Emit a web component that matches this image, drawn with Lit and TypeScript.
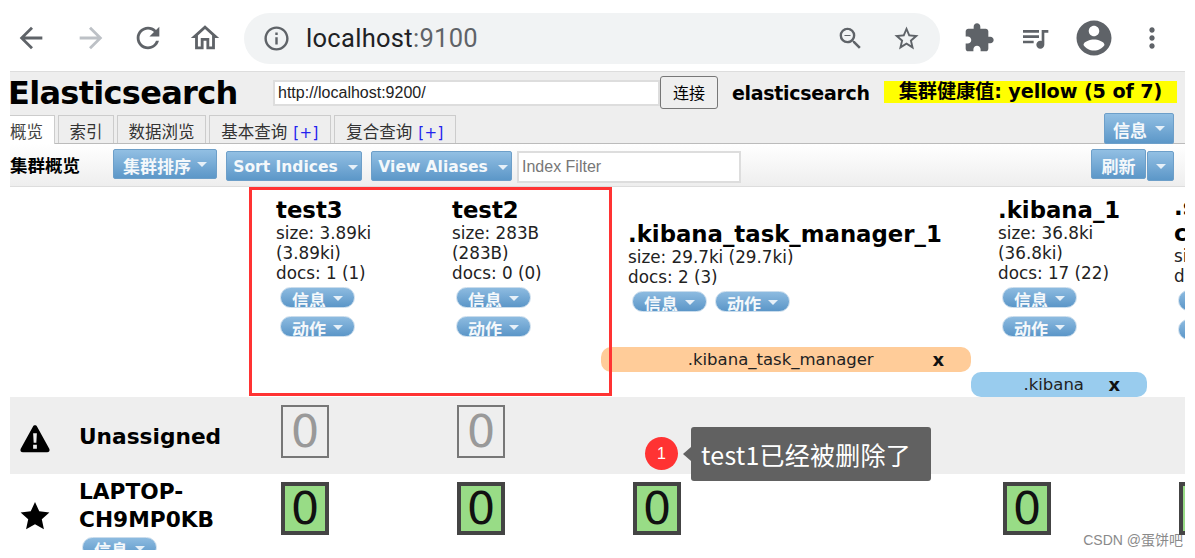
import { LitElement, html, css, svg } from "lit";
import { customElement } from "lit/decorators.js";

const ICONS: Record<string, string> = {
  back: "M20 11H7.83l5.59-5.59L12 4l-8 8 8 8 1.41-1.41L7.83 13H20v-2z",
  reload: "M17.65 6.35A7.958 7.958 0 0012 4c-4.42 0-7.99 3.58-7.99 8s3.57 8 7.99 8c3.73 0 6.84-2.55 7.73-6h-2.08A5.99 5.99 0 0112 18c-3.31 0-6-2.69-6-6s2.69-6 6-6c1.66 0 3.14.69 4.22 1.78L13 11h7V4l-2.35 2.35z",
  home: "M12 5.69l5 4.5V18h-2v-6H9v6H7v-7.81l5-4.5M12 3L2 12h3v8h6v-6h2v6h6v-8h3L12 3z",
  info: "M11 7h2v2h-2zm0 4h2v6h-2zm1-9C6.48 2 2 6.48 2 12s4.48 10 10 10 10-4.48 10-10S17.52 2 12 2zm0 18c-4.41 0-8-3.59-8-8s3.59-8 8-8 8 3.59 8 8-3.59 8-8 8z",
  zoom: "M15.5 14h-.79l-.28-.27A6.471 6.471 0 0016 9.5 6.5 6.5 0 109.5 16c1.61 0 3.09-.59 4.23-1.57l.27.28v.79l5 4.99L20.49 19l-4.99-5zm-6 0C7.01 14 5 11.99 5 9.5S7.01 5 9.5 5 14 7.01 14 9.5 11.99 14 9.5 14zM7 9h5v1H7z",
  star: "M22 9.24l-7.19-.62L12 2 9.19 8.63 2 9.24l5.46 4.73L5.82 21 12 17.27 18.18 21l-1.63-7.03L22 9.24zM12 15.4l-3.76 2.27 1-4.28-3.32-2.88 4.38-.38L12 6.1l1.71 4.04 4.38.38-3.32 2.88 1 4.28L12 15.4z",
  ext: "M20.5 11H19V7c0-1.1-.9-2-2-2h-4V3.5C13 2.12 11.88 1 10.5 1S8 2.12 8 3.5V5H4c-1.1 0-1.99.9-1.99 2v3.8H3.5c1.49 0 2.7 1.21 2.7 2.7s-1.21 2.7-2.7 2.7H2V20c0 1.1.9 2 2 2h3.8v-1.5c0-1.49 1.21-2.7 2.7-2.7 1.49 0 2.7 1.21 2.7 2.7V22H17c1.1 0 2-.9 2-2v-4h1.5c1.38 0 2.5-1.12 2.5-2.5S21.88 11 20.5 11z",
  queue: "M15 6H3v2h12V6zm0 4H3v2h12v-2zM3 16h8v-2H3v2zM17 6v8.18c-.31-.11-.65-.18-1-.18-1.66 0-3 1.34-3 3s1.34 3 3 3 3-1.34 3-3V8h3V6h-5z",
  user: "M12 2C6.48 2 2 6.48 2 12s4.48 10 10 10 10-4.48 10-10S17.52 2 12 2zm0 3c1.66 0 3 1.34 3 3s-1.34 3-3 3-3-1.34-3-3 1.34-3 3-3zm0 14.2c-2.5 0-4.71-1.28-6-3.22.03-1.99 4-3.08 6-3.08 1.99 0 5.97 1.09 6 3.08-1.29 1.94-3.5 3.22-6 3.22z",
  more: "M12 8c1.1 0 2-.9 2-2s-.9-2-2-2-2 .9-2 2 .9 2 2 2zm0 2c-1.1 0-2 .9-2 2s.9 2 2 2 2-.9 2-2-.9-2-2-2zm0 6c-1.1 0-2 .9-2 2s.9 2 2 2 2-.9 2-2-.9-2-2-2z",
  warn: "M12 2.5c-.7 0-1.2.4-1.6 1L1.3 20c-.7 1.3.1 2.6 1.6 2.6h18.2c1.5 0 2.3-1.3 1.6-2.6L13.6 3.5c-.4-.6-.9-1-1.6-1zM10.6 8.5h2.8l-.4 7h-2l-.4-7zM10.6 17h2.8v3h-2.8v-3z",
  solid: "M12 1.5l3.2 7 7.6.8-5.7 5.1 1.6 7.6L12 18.2 5.3 22l1.6-7.6L1.2 9.3l7.6-.8z",
};

const icon = (name: string, cls = "") =>
  html`<svg class="ic ${cls}" viewBox="0 0 24 24">${svg`<path d=${ICONS[name]}></path>`}</svg>`;

function svgFlip() {
  return html`<svg class="ic" viewBox="0 0 24 24">${svg`<path transform="matrix(-1 0 0 1 24 0)" d=${ICONS.back}></path>`}</svg>`;
}

interface Index { name: string; lines: string[]; stacked: boolean; }

const INDICES: Index[] = [
  { name: "test3", lines: ["size: 3.89ki (3.89ki)", "docs: 1 (1)"], stacked: true },
  { name: "test2", lines: ["size: 283B (283B)", "docs: 0 (0)"], stacked: true },
  { name: ".kibana_task_manager_1", lines: ["size: 29.7ki (29.7ki)", "docs: 2 (3)"], stacked: false },
  { name: ".kibana_1", lines: ["size: 36.8ki (36.8ki)", "docs: 17 (22)"], stacked: true },
  { name: ".security config", lines: ["size: 3.5ki", "docs: 1 (1)"], stacked: true },
];

@customElement("app-root")
export class AppRoot extends LitElement {
  static styles = css`
    :host { display: block; width: 1195px; height: 558px; overflow: hidden; background: #fff; position: relative; font-family: "DejaVu Sans", sans-serif; color: #000; }
    * { box-sizing: border-box; }
    .ic { display: block; fill: currentColor; flex: none; }

    .chrome { height: 71px; display: flex; align-items: center; padding: 5px 0 0 14px; color: #5f6368; }
    .nav { width: 60px; display: flex; align-items: center; }
    .nav .ic { width: 34px; height: 34px; }
    .nav.fwd { color: #bdc1c6; width: 57px; }
    .nav.rel { width: 57px; }
    .nav.hm { width: 56px; }
    .omni { width: 696px; height: 51px; border-radius: 26px; background: #f1f3f4; display: flex; align-items: center; padding-left: 18px; }
    .omni .ic { width: 29px; height: 29px; }
    .url { font: 25.5px Roboto, sans-serif; color: #202124; margin-left: 15px; flex: 1; letter-spacing: .3px; }
    .url span { color: #5f6368; }
    .omni .z { margin-right: 27px; }
    .omni .s { margin-right: 19px; }
    .tools { display: flex; align-items: center; margin-left: 23px; gap: 24px; }
    .tools .ic { width: 32px; height: 32px; }
    .tools .m { width: 42px; height: 42px; margin: 0 -3px 0 -2px; }

    .page { margin-left: 10px; width: 1175px; height: 479px; overflow: hidden; }
    .top { height: 73px; background: #eee; border-top: 1px solid #ddd; border-bottom: 1px solid #bbb; display: flex; flex-direction: column; }
    .head { height: 43px; display: flex; align-items: center; }
    .title { font: bold 32px/1.3 "DejaVu Sans", sans-serif; letter-spacing: -.7px; width: 263px; white-space: nowrap; margin: 0 0 0 -2px; flex: none; }
    .uri { width: 387px; height: 26px; margin: -2px 0 0 2px; background: #fff; border: 2px solid #ddd; font: 16px/22px "Liberation Sans", sans-serif; padding-left: 3px; color: #222; }
    .conn { width: 58px; height: 33px; margin-top: -2px; border: 1px solid #777; border-radius: 3px; background: #efefef; font: 16px/31px "Noto Sans CJK SC", sans-serif; text-align: center; }
    .cname { font: bold 19px "DejaVu Sans", sans-serif; margin: -2px 0 0 14px; width: 152px; white-space: nowrap; letter-spacing: -.3px; }
    .health { width: 293px; height: 22px; margin-top: -4px; background: #ff0; font: bold 19.2px/22px "DejaVu Sans", "Noto Sans CJK SC", sans-serif; text-align: center; white-space: nowrap; letter-spacing: -.1px; }
    .tabs { height: 28px; display: flex; gap: 3px; align-items: flex-end; }
    .tab { height: 28px; border: 1px solid #ccc; border-bottom: 0; font: 16.5px/30px "Noto Sans CJK SC", sans-serif; text-align: center; color: #333; white-space: nowrap; }
    .tab.on { background: #fff; height: 29px; margin-bottom: -1px; color: #444; border-left: 0; text-align: left; }
    .tab b { font-weight: 400; color: #22e; font-family: "DejaVu Sans", sans-serif; font-size: 15px; margin-left: 6px; letter-spacing: .4px; }
    .spacer { flex: 1; }
    .tabs .btn { margin-right: 11px; align-self: flex-end; margin-bottom: -1px; }

    .btn { display: inline-flex; align-items: center; justify-content: center; gap: 8px; height: 30px; flex: none; border: 1px solid #6d9fc9; border-radius: 2px; background: linear-gradient(#92bfe3, #5c97c8); color: #f4f8fb; font: bold 17px/1 "Noto Sans CJK SC", sans-serif; white-space: nowrap; }
    .btn span { padding-top: 2px; }
    .btn.lat { font: bold 15.5px/1 "DejaVu Sans", sans-serif; gap: 10px; padding: 3px 0 0 3px; }
    .caret { width: 0; height: 0; border: 5px solid transparent; border-top: 5px solid #e6f0f8; border-bottom: 0; flex: none; }

    .bar { height: 43px; display: flex; background: linear-gradient(#fff, #eee); border-bottom: 1px solid #ddd; padding-top: 5px; }
    .bar h2 { font: bold 17.5px/32px "Noto Sans CJK SC", sans-serif; width: 103px; margin: 0; flex: none; }
    .bar .low { margin-top: 2px; }
    .filter { width: 224px; height: 32px; margin: 2px 0 0 5px; background: #fff; border: 2px solid #ddd; color: #777; font: 16px/28px "Liberation Sans", sans-serif; padding-left: 3px; }

    .grid { display: grid; grid-template-columns: 239px 176px 176px 370px 176px 176px; grid-template-rows: 160px 25px 25px 77px 76px; width: 1313px; }
    .cell { min-width: 0; padding: 0 22px 0 27px; display: flex; flex-direction: column; justify-content: center; }
    .cell h3 { margin: 0; font: bold 22.8px/26px "DejaVu Sans", sans-serif; }
    .cell p { margin: 0; font: 16.8px/20px "DejaVu Sans", sans-serif; color: #222; }
    .acts { display: flex; flex-wrap: wrap; gap: 8px 8px; margin: 4px 0 1px 4px; }
    .acts.stk { flex-direction: column; align-items: flex-start; }
    .pill { display: flex; justify-content: center; gap: 7px; width: 75px; height: 21px; overflow: hidden; border: 1px solid #c9dcec; border-radius: 11px; background: linear-gradient(#8dbbe0, #5b96c8); color: #f4f8fb; font: bold 17px/1 "Noto Sans CJK SC", sans-serif; padding-top: 1px; }
    .pill span { display: block; line-height: 21px; }
    .pill .caret { margin-top: 7px; border-width: 5px 5px 0; }
    .alias { height: 25px; border-radius: 10px; display: flex; align-items: center; font: 16.5px "DejaVu Sans", sans-serif; color: #222; }
    .alias span { flex: 1; text-align: center; padding-left: 28px; }
    .alias b { font-size: 18px; margin-right: 27px; color: #111; }
    .a1 { grid-column: 4; grid-row: 2; background: #fc9; }
    .a2 { grid-column: 5; grid-row: 3; background: #99ccee; }
    .band { grid-column: 1 / -1; grid-row: 4; background: #eee; }
    .rowlabel { display: flex; align-items: center; padding-left: 9px; gap: 28px; min-width: 0; z-index: 1; }
    .rowlabel .ic { width: 32px; height: 32px; margin-top: 4px; flex: none; }
    .rowlabel .n { font: bold 21.7px/28px "DejaVu Sans", sans-serif; white-space: nowrap; padding-top: 3px; }
    .node { align-items: flex-start; padding-top: 1px; }
    .node .ic { margin-top: 25px; }
    .node .pill { margin: 3px 0 0 3px; }
    .sc { padding-left: 32px; padding-top: 8px; z-index: 1; }
    .shard { width: 48px; height: 53px; border: 2px solid #777; color: #999; font: 45px/49px "DejaVu Sans", sans-serif; text-align: center; }
    .shard.ok { border: 4px solid #444; background: #98dc86; color: #111; line-height: 45px; }

    .redbox { position: absolute; left: 249px; top: 187px; width: 363px; height: 209px; border: 3px solid #f33; }
    .tip { position: absolute; left: 691px; top: 427px; width: 240px; height: 54px; background: #616161; border-radius: 3px; color: #fff; font: 25px/54px "Noto Sans CJK SC", sans-serif; letter-spacing: .25px; padding-left: 10px; white-space: nowrap; }
    .tip::before { content: ""; position: absolute; left: -8px; top: 20px; border: 7px solid transparent; border-left: 0; border-right: 8px solid #616161; }
    .dot { position: absolute; left: 645px; top: 437px; width: 33px; height: 33px; border-radius: 50%; background: #f33; color: #fff; font: 16px/33px "Liberation Sans", sans-serif; text-align: center; }
    .mark { position: absolute; right: 12px; top: 530px; font: 14px/20px "Liberation Sans", "Noto Sans CJK SC", sans-serif; color: #8a8a8a; }
  `;

  private cell(ix: Index) {
    return html`<div class="cell">
      <h3>${ix.name}</h3>
      ${ix.lines.map((l) => html`<p>${l}</p>`)}
      <div class="acts ${ix.stacked ? "stk" : ""}">
        <div class="pill"><span>信息</span><i class="caret"></i></div>
        <div class="pill"><span>动作</span><i class="caret"></i></div>
      </div>
    </div>`;
  }

  render() {
    return html`
      <div class="chrome">
        <div class="nav">${icon("back")}</div>
        <div class="nav fwd">${svgFlip()}</div>
        <div class="nav rel">${icon("reload")}</div>
        <div class="nav hm">${icon("home")}</div>
        <div class="omni">
          ${icon("info")}
          <div class="url">localhost<span>:9100</span></div>
          ${icon("zoom", "z")}${icon("star", "s")}
        </div>
        <div class="tools">
          ${icon("ext")}${icon("queue")}${icon("user", "m")}${icon("more")}
        </div>
      </div>

      <div class="page">
        <div class="top">
          <div class="head">
            <div class="title">Elasticsearch</div>
            <div class="uri">http://localhost:9200/</div>
            <div class="conn">连接</div>
            <div class="cname">elasticsearch</div>
            <div class="health">集群健康值: yellow (5 of 7)</div>
          </div>
          <div class="tabs">
            <div class="tab on" style="width:45px">概览</div>
            <div class="tab" style="width:56px">索引</div>
            <div class="tab" style="width:89px">数据浏览</div>
            <div class="tab" style="width:122px">基本查询<b>[+]</b></div>
            <div class="tab" style="width:122px">复合查询<b>[+]</b></div>
            <div class="spacer"></div>
            <div class="btn" style="width:70px;height:31px"><span>信息</span><i class="caret"></i></div>
          </div>
        </div>
        <div class="bar">
          <h2>集群概览</h2>
          <div class="btn" style="width:104px;gap:6px"><span>集群排序</span><i class="caret"></i></div>
          <div class="btn low lat" style="width:136px;margin-left:9px">Sort Indices<i class="caret"></i></div>
          <div class="btn low lat" style="width:141px;margin-left:9px">View Aliases<i class="caret"></i></div>
          <div class="filter">Index Filter</div>
          <div class="spacer"></div>
          <div class="btn" style="width:55px"><span>刷新</span></div>
          <div class="btn low" style="width:27px;margin:2px 11px 0 1px"><i class="caret"></i></div>
        </div>
        <div class="grid">
          <div></div>
          ${INDICES.map((ix) => this.cell(ix))}
          <div class="alias a1"><span>.kibana_task_manager</span><b>x</b></div>
          <div class="alias a2"><span>.kibana</span><b>x</b></div>
          <div class="band"></div>
          <div class="rowlabel" style="grid-column:1;grid-row:4">${icon("warn")}<div class="n">Unassigned</div></div>
          <div class="sc" style="grid-column:2;grid-row:4"><div class="shard">0</div></div>
          <div class="sc" style="grid-column:3;grid-row:4"><div class="shard">0</div></div>
          <div class="rowlabel node" style="grid-column:1;grid-row:5">${icon("solid")}
            <div><div class="n">LAPTOP-<br />CH9MP0KB</div><div class="pill"><span>信息</span><i class="caret"></i></div></div>
          </div>
          ${[2, 3, 4, 5, 6].map((c) => html`<div class="sc" style="grid-column:${c};grid-row:5"><div class="shard ok">0</div></div>`)}
        </div>
      </div>

      <div class="redbox"></div>
      <div class="dot">1</div>
      <div class="tip">test1已经被删除了</div>
      <div class="mark">CSDN @蛋饼吧</div>
    `;
  }
}
